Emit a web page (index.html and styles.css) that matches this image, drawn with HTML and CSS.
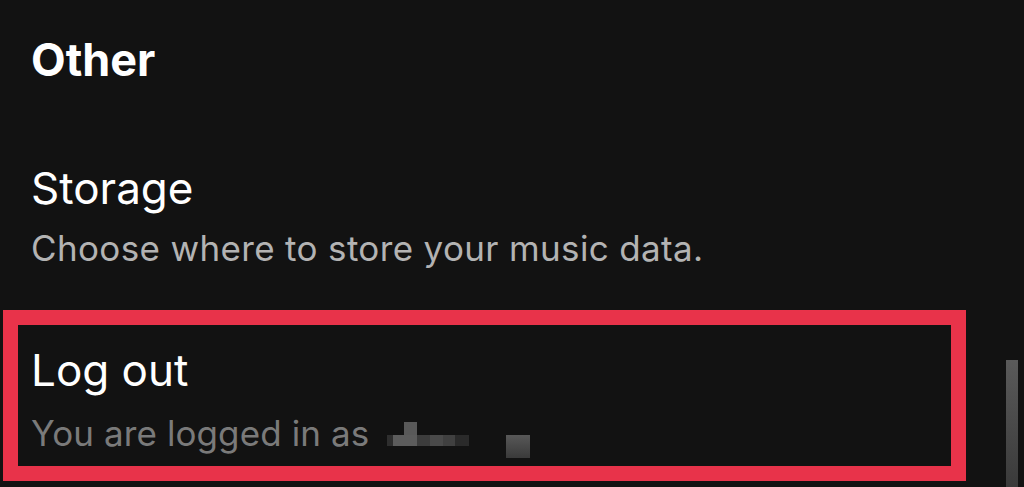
FILE: index.html
```html
<!DOCTYPE html>
<html>
<head>
<meta charset="utf-8">
<link rel="stylesheet" href="styles.css">
</head>
<body>
<div class="screen">
  <h2 class="section-title">Other</h2>
  <div class="item first">
    <div class="item-title">Storage</div>
    <div class="item-sub wide">Choose where to store your music data.</div>
  </div>
  <div class="item highlighted">
    <div class="item-title">Log out</div>
    <div class="item-sub muted">You are logged in as <span class="redact"><span class="px a"></span><span class="px b"><span class="px b-top"></span></span><span class="px c"></span><span class="px d"></span><span class="px e"></span><span class="px f"></span><span class="gap"></span><span class="px g"></span></span></div>
  </div>
  <div class="scrollbar"></div>
</div>
</body>
</html>
```

FILE: styles.css
```css
html, body {
  margin: 0;
  padding: 0;
  background: #121212;
}
.screen {
  position: relative;
  width: 1024px;
  height: 487px;
  overflow: hidden;
  background: #121212;
  font-family: Inter, "Liberation Sans", sans-serif;
  display: flex;
  flex-direction: column;
  padding: 30px 0 0 0;
  box-sizing: border-box;
}
.section-title {
  margin: 0 0 0 31px;
  font-size: 45px;
  font-weight: 700;
  color: #ffffff;
  line-height: 60px;
}
.item {
  display: flex;
  flex-direction: column;
  padding-left: 31px;
}
.item.first {
  margin-top: 70px;
}
.item-title {
  font-size: 44px;
  color: #ffffff;
  line-height: 56px;
}
.item-sub {
  font-size: 35px;
  color: #b3b3b3;
  line-height: 44px;
  margin-top: 10px;
  letter-spacing: 0.1px;
}
.item-sub.wide {
  letter-spacing: 0.35px;
}
.item-sub.muted {
  color: #7a7a7a;
  margin-top: 13px;
}
.highlighted {
  margin-top: 40px;
  margin-left: 3px;
  width: 963px;
  height: 171px;
  box-sizing: border-box;
  border: 15px solid #e8334a;
  padding-left: 13px;
  padding-top: 17px;
}
.redact {
  display: inline-flex;
  align-items: flex-end;
  height: 36px;
  vertical-align: 0;
  margin-left: 8px;
}
.px { display: inline-block; height: 11px; margin-bottom: 12px; position: relative; }
.a { width: 6px; background: #2e2e2e; }
.b { width: 24px; background: #5c5c5c; }
.b-top { position: absolute; left: 11px; bottom: 11px; width: 13px; height: 13px; margin: 0; background: #595959; }
.c { width: 13px; background: #3c3c3c; }
.d { width: 13px; background: #4a4a4a; }
.e { width: 12px; background: #404040; }
.f { width: 14px; background: #2a2a2a; }
.gap { display: inline-block; width: 37px; }
.g { width: 24px; height: 23px; margin-bottom: 0; background: linear-gradient(#585858, #3a3a3a); }
.scrollbar {
  position: absolute;
  left: 1006px;
  top: 360px;
  width: 12px;
  height: 127px;
  background: linear-gradient(#5a5a5a, #3a3a3a);
}
```
